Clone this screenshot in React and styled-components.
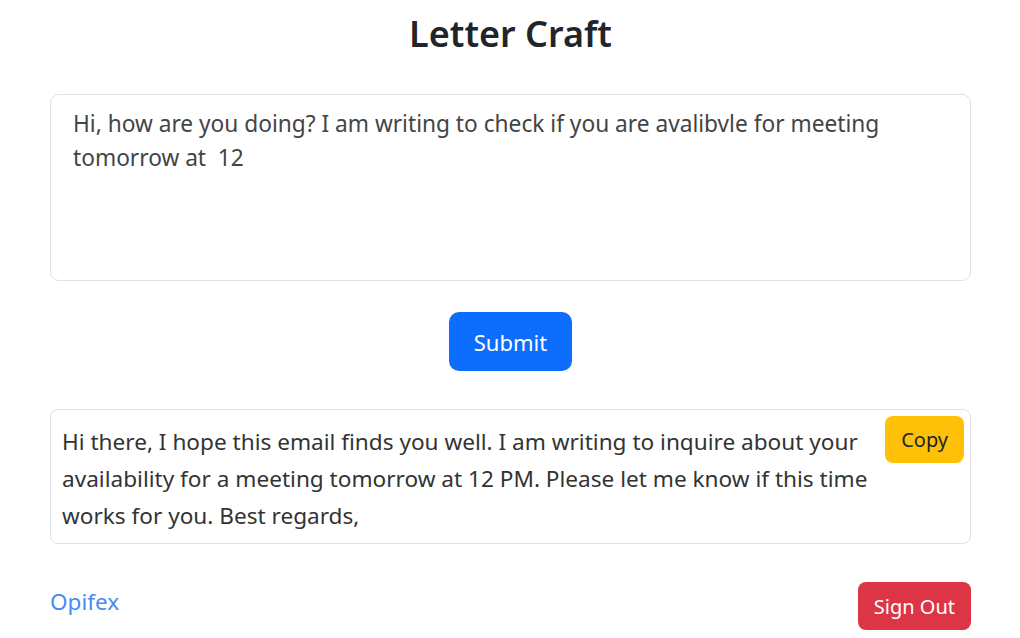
import React, { useState } from "react";
import styled, { createGlobalStyle } from "styled-components";

const GlobalStyle = createGlobalStyle`
    body {
        margin: 0;
        background: #fff;
        font-family: "Noto Sans", "Open Sans", sans-serif;
        color: #212529;
    }
`;

const Page = styled.div`
    width: 1020px;
    height: 638px;
    box-sizing: border-box;
    padding: 0 49px 0 50px;
    display: flex;
    flex-direction: column;
    overflow: hidden;
`;

const Title = styled.h1`
    margin: 12px 0 0;
    height: 44px;
    text-align: center;
    font-size: 36px;
    font-weight: 600;
    line-height: 44px;
    color: #212529;
`;

const Prompt = styled.textarea`
    margin-top: 38px;
    height: 187px;
    box-sizing: border-box;
    padding: 12px 22px;
    border: 1px solid #dee2e6;
    border-radius: 9px;
    font-family: inherit;
    font-size: 22.7px;
    line-height: 34px;
    color: #444;
    resize: none;
    outline: none;
`;

const Button = styled.button`
    border: none;
    border-radius: ${(p) => p.radius || 8}px;
    font-family: inherit;
    font-size: ${(p) => p.size || 20}px;
    padding: 0 ${(p) => p.padX || 14}px;
    height: ${(p) => p.height || 47}px;
    background: ${(p) => p.bg};
    color: ${(p) => p.fg || "#fff"};
    cursor: pointer;
`;

const SubmitRow = styled.div`
    margin-top: 31px;
    display: flex;
    justify-content: center;
`;

const Output = styled.div`
    margin-top: 38px;
    height: 135px;
    box-sizing: border-box;
    border: 1px solid #dee2e6;
    border-radius: 8px;
    padding: 6px 6px 0 11px;
    display: flex;
    align-items: flex-start;
    gap: 8px;
`;

const OutputText = styled.p`
    margin: 7px 0 0;
    flex: 1;
    font-size: 22.6px;
    line-height: 37px;
    color: #333;
`;

const Footer = styled.div`
    margin-top: 38px;
    display: flex;
    justify-content: space-between;
    align-items: center;
`;

const BrandLink = styled.a`
    color: #4a8af4;
    font-size: 22.5px;
    text-decoration: none;
    margin-bottom: 10px;
`;

const App = () => {
    const [prompt, setPrompt] = useState(
        "Hi, how are you doing? I am writing to check if you are avalibvle for meeting tomorrow at  12"
    );

    return (
        <>
            <GlobalStyle />
            <Page>
                <Title>Letter Craft</Title>
                <Prompt
                    value={prompt}
                    onChange={(e) => setPrompt(e.target.value)}
                />
                <SubmitRow>
                    <Button bg="#0d6efd" height={59} padX={25} size={22} radius={10}>
                        Submit
                    </Button>
                </SubmitRow>
                <Output>
                    <OutputText>
                        Hi there, I hope this email finds you well. I am writing
                        to inquire about your availability for a meeting
                        tomorrow at 12 PM. Please let me know if this time works
                        for you. Best regards,
                    </OutputText>
                    <Button bg="#ffc107" fg="#212529" height={47} padX={16}>
                        Copy
                    </Button>
                </Output>
                <Footer>
                    <BrandLink href="#">Opifex</BrandLink>
                    <Button bg="#dc3545" height={48} padX={16}>
                        Sign Out
                    </Button>
                </Footer>
            </Page>
        </>
    );
};

export default App;
